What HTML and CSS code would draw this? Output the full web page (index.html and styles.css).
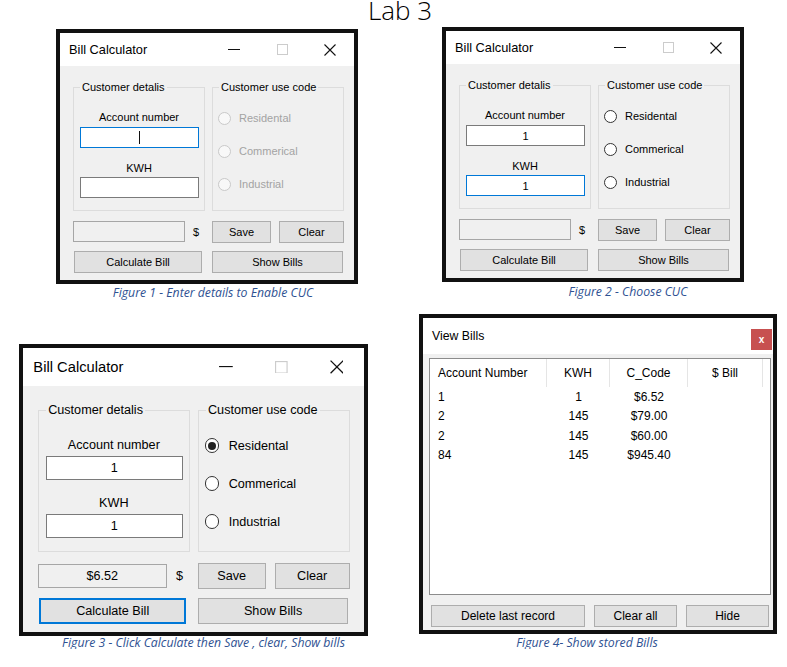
FILE: index.html
```html
<!DOCTYPE html>
<html lang="en">
<head>
<meta charset="utf-8">
<title>Lab 3</title>
<link rel="stylesheet" href="styles.css">
</head>
<body>
<h1 class="doc-title">Lab 3</h1>

<div class="row row-top">
  <figure class="fig fig-1">
    <div class="win calc">
      <div class="titlebar">
        <span class="title">Bill Calculator</span>
        <div class="controls">
          <span class="ctl"><svg width="12" height="1" viewBox="0 0 12 1"><rect width="12" height="1" fill="#111"/></svg></span>
          <span class="ctl"><svg width="11" height="11" viewBox="0 0 11 11"><rect x="0.5" y="0.5" width="10" height="10" fill="none" stroke="#cccccc"/></svg></span>
          <span class="ctl"><svg width="12" height="12" viewBox="0 0 12 12"><path d="M0.5 0.5L11.5 11.5M11.5 0.5L0.5 11.5" stroke="#111" stroke-width="1.1" fill="none"/></svg></span>
        </div>
      </div>
      <div class="calc-body">
        <fieldset class="group group-details">
          <legend>Customer detalis</legend>
          <div class="field-label lbl-account">Account number</div>
          <div class="textbox is-focused"><span class="caret"></span></div>
          <div class="field-label lbl-kwh">KWH</div>
          <div class="textbox textbox-kwh"></div>
        </fieldset>
        <fieldset class="group group-cuc is-disabled">
          <legend>Customer use code</legend>
          <div class="radio radio-first"><span class="radio-mark"></span>Residental</div>
          <div class="radio"><span class="radio-mark"></span>Commerical</div>
          <div class="radio"><span class="radio-mark"></span>Industrial</div>
        </fieldset>
        <div class="result-row"><div class="output"></div><span class="currency">$</span></div>
        <div class="actions"><span class="btn btn-save">Save</span><span class="btn btn-clear">Clear</span></div>
        <span class="btn btn-calc">Calculate Bill</span>
        <span class="btn btn-show">Show Bills</span>
      </div>
    </div>
    <figcaption class="caption">Figure 1 - Enter details to Enable CUC</figcaption>
  </figure>

  <figure class="fig fig-2">
    <div class="win calc">
      <div class="titlebar">
        <span class="title">Bill Calculator</span>
        <div class="controls">
          <span class="ctl"><svg width="12" height="1" viewBox="0 0 12 1"><rect width="12" height="1" fill="#111"/></svg></span>
          <span class="ctl"><svg width="11" height="11" viewBox="0 0 11 11"><rect x="0.5" y="0.5" width="10" height="10" fill="none" stroke="#cccccc"/></svg></span>
          <span class="ctl"><svg width="12" height="12" viewBox="0 0 12 12"><path d="M0.5 0.5L11.5 11.5M11.5 0.5L0.5 11.5" stroke="#111" stroke-width="1.1" fill="none"/></svg></span>
        </div>
      </div>
      <div class="calc-body">
        <fieldset class="group group-details">
          <legend>Customer detalis</legend>
          <div class="field-label lbl-account">Account number</div>
          <div class="textbox">1</div>
          <div class="field-label lbl-kwh">KWH</div>
          <div class="textbox textbox-kwh is-focused">1</div>
        </fieldset>
        <fieldset class="group group-cuc">
          <legend>Customer use code</legend>
          <div class="radio radio-first"><span class="radio-mark"></span>Residental</div>
          <div class="radio"><span class="radio-mark"></span>Commerical</div>
          <div class="radio"><span class="radio-mark"></span>Industrial</div>
        </fieldset>
        <div class="result-row"><div class="output"></div><span class="currency">$</span></div>
        <div class="actions"><span class="btn btn-save">Save</span><span class="btn btn-clear">Clear</span></div>
        <span class="btn btn-calc">Calculate Bill</span>
        <span class="btn btn-show">Show Bills</span>
      </div>
    </div>
    <figcaption class="caption">Figure 2 - Choose CUC</figcaption>
  </figure>
</div>

<div class="row row-bottom">
  <figure class="fig fig-3">
    <div class="win calc calc-lg">
      <div class="titlebar">
        <span class="title">Bill Calculator</span>
        <div class="controls">
          <span class="ctl"><svg width="12" height="1" viewBox="0 0 12 1"><rect width="12" height="1" fill="#111"/></svg></span>
          <span class="ctl"><svg width="11" height="11" viewBox="0 0 11 11"><rect x="0.5" y="0.5" width="10" height="10" fill="none" stroke="#cccccc"/></svg></span>
          <span class="ctl"><svg width="12" height="12" viewBox="0 0 12 12"><path d="M0.5 0.5L11.5 11.5M11.5 0.5L0.5 11.5" stroke="#111" stroke-width="1.1" fill="none"/></svg></span>
        </div>
      </div>
      <div class="calc-body">
        <fieldset class="group group-details">
          <legend>Customer detalis</legend>
          <div class="field-label lbl-account">Account number</div>
          <div class="textbox">1</div>
          <div class="field-label lbl-kwh">KWH</div>
          <div class="textbox textbox-kwh">1</div>
        </fieldset>
        <fieldset class="group group-cuc">
          <legend>Customer use code</legend>
          <div class="radio radio-first is-checked"><span class="radio-mark"></span>Residental</div>
          <div class="radio"><span class="radio-mark"></span>Commerical</div>
          <div class="radio"><span class="radio-mark"></span>Industrial</div>
        </fieldset>
        <div class="result-row"><div class="output">$6.52</div><span class="currency">$</span></div>
        <div class="actions"><span class="btn btn-save">Save</span><span class="btn btn-clear">Clear</span></div>
        <span class="btn btn-calc is-default">Calculate Bill</span>
        <span class="btn btn-show">Show Bills</span>
      </div>
    </div>
    <figcaption class="caption">Figure 3 - Click Calculate then Save , clear, Show bills</figcaption>
  </figure>

  <figure class="fig fig-4">
    <div class="win viewer">
      <div class="titlebar viewer-titlebar">
        <span class="title">View Bills</span>
        <span class="viewer-close">x</span>
      </div>
      <div class="viewer-body">
        <div class="listview">
          <div class="lv-row lv-head">
            <span class="lv-cell lv-left">Account Number</span>
            <span class="lv-cell">KWH</span>
            <span class="lv-cell">C_Code</span>
            <span class="lv-cell">$ Bill</span>
          </div>
          <div class="lv-row"><span class="lv-cell lv-left">1</span><span class="lv-cell">1</span><span class="lv-cell">$6.52</span><span class="lv-cell"></span></div>
          <div class="lv-row"><span class="lv-cell lv-left">2</span><span class="lv-cell">145</span><span class="lv-cell">$79.00</span><span class="lv-cell"></span></div>
          <div class="lv-row"><span class="lv-cell lv-left">2</span><span class="lv-cell">145</span><span class="lv-cell">$60.00</span><span class="lv-cell"></span></div>
          <div class="lv-row"><span class="lv-cell lv-left">84</span><span class="lv-cell">145</span><span class="lv-cell">$945.40</span><span class="lv-cell"></span></div>
        </div>
        <div class="viewer-actions">
          <span class="btn btn-delete">Delete last record</span>
          <span class="btn btn-wide">Clear all</span>
          <span class="btn btn-wide">Hide</span>
        </div>
      </div>
    </div>
    <figcaption class="caption">Figure 4- Show stored Bills</figcaption>
  </figure>
</div>
</body>
</html>
```

FILE: styles.css
```css
* { box-sizing: border-box; }

body {
  margin: 0;
  width: 787px;
  background: #fff;
  color: #000;
  font-family: "Liberation Sans", Arial, sans-serif;
}

.doc-title {
  margin: 0;
  height: 20px;
  line-height: 20px;
  padding-left: 13px;
  text-align: center;
  font-family: "Open Sans", "Liberation Sans", sans-serif;
  font-weight: 300;
  font-size: 26px;
}

.row { display: flex; align-items: flex-start; }
.row-top { padding-left: 56px; }
.row-bottom { padding-left: 19px; }

.fig { margin: 0; display: flex; flex-direction: column; }
.fig-1 { margin-top: 9px; }
.fig-2 { margin-top: 7px; margin-left: 84px; }
.fig-3 { margin-top: 45px; }
.fig-4 { margin-top: 15px; margin-left: 51px; }

.caption {
  margin-top: 2px;
  line-height: 13px;
  font-family: "Open Sans", "Liberation Sans", sans-serif;
  font-style: italic;
  font-size: 12.25px;
  color: #2e5192;
  text-align: center;
  white-space: nowrap;
}
.fig-1 .caption { padding-left: 12px; }
.fig-2 .caption { padding-left: 70px; margin-top: 3px; }
.fig-3 .caption { padding-left: 20px; margin-top: 0; }
.fig-4 .caption { padding-right: 22px; }

/* window frame */
.win {
  border: 4px solid #111;
  background: #f0f0f0;
  display: flex;
  flex-direction: column;
}
.titlebar {
  height: 33px;
  flex: none;
  background: #fff;
  display: flex;
  align-items: center;
  padding-left: 9px;
}
.title { flex: 1; font-size: 12.8px; }
.controls { display: flex; align-self: stretch; }
.ctl { width: 48px; display: flex; align-items: center; justify-content: center; }

/* bill calculator */
.calc { width: 302px; height: 255px; }
.calc-lg { zoom: 1.15; width: 303.5px; height: 254px; }

.calc-body {
  flex: 1;
  display: grid;
  grid-template-columns: 132px 132px;
  column-gap: 7px;
  align-content: start;
  padding: 14px 10px 7px 13px;
  font-size: 11px;
}

.group {
  margin: 0;
  padding: 0;
  min-width: 0;
  border: 1px solid #dcdcdc;
}
.group legend {
  margin-left: 6px;
  padding: 0 2px;
  line-height: 14px;
  font-size: 11px;
}
.group-details { padding-bottom: 12px; }
.group-cuc { padding-bottom: 19px; }

.field-label { text-align: center; line-height: 14px; }
.lbl-account { margin-top: 16px; }
.lbl-kwh { margin-top: 13px; }

.textbox {
  margin: 3px 0 0 6px;
  width: 119px;
  height: 21px;
  background: #fff;
  border: 1px solid #7a7a7a;
  display: flex;
  align-items: center;
  justify-content: center;
  font-size: 11px;
}
.textbox-kwh { margin-top: 2px; }
.textbox.is-focused { border-color: #0078d7; }
.caret { width: 1px; height: 13px; background: #111; }

.radio {
  display: flex;
  align-items: center;
  height: 14px;
  margin: 19px 0 0 5px;
}
.radio-first { margin-top: 17px; }
.radio-mark {
  width: 13px;
  height: 13px;
  margin-right: 8px;
  border: 1px solid #333;
  border-radius: 50%;
  background: #fff;
  display: flex;
  align-items: center;
  justify-content: center;
}
.radio.is-checked .radio-mark::after {
  content: "";
  width: 7px;
  height: 7px;
  border-radius: 50%;
  background: #222;
}
.is-disabled .radio { color: #a3a3a3; }
.is-disabled .radio-mark { border-color: #c9c9c9; background: #f8f8f8; }

.result-row {
  margin-top: 9px;
  height: 23px;
  display: flex;
  align-items: center;
}
.output {
  width: 112px;
  height: 21px;
  border: 1px solid #a6a6a6;
  background: #f0f0f0;
  display: flex;
  align-items: center;
  justify-content: center;
}
.currency { margin-left: 8px; }

.actions {
  margin-top: 9px;
  height: 23px;
  display: flex;
  align-items: center;
  gap: 8px;
}

.btn {
  height: 22px;
  border: 1px solid #adadad;
  background: #e1e1e1;
  display: flex;
  align-items: center;
  justify-content: center;
  white-space: nowrap;
}
.btn-save { width: 59px; }
.btn-clear { flex: 1; }
.btn-calc { margin: 8px 0 0 1px; width: 128px; }
.btn-show { margin-top: 8px; width: 131px; }
.btn.is-default { border: 2px solid #0078d7; }

/* view bills */
.viewer { width: 358px; height: 320px; }
.viewer-titlebar { height: 36px; }
.viewer-titlebar .title { font-size: 12.3px; }
.viewer-close {
  align-self: flex-start;
  margin: 11px 1px 0 0;
  width: 21px;
  height: 21px;
  background: #c75050;
  color: #fff;
  font-weight: bold;
  font-size: 10px;
  display: flex;
  align-items: center;
  justify-content: center;
}
.viewer-body {
  flex: 1;
  display: flex;
  flex-direction: column;
  padding: 4px 2px 3px 6px;
  font-size: 12px;
}
.listview {
  width: 342px;
  height: 237px;
  flex: none;
  background: #fff;
  border: 1px solid #8c8c8c;
}
.lv-row {
  display: grid;
  grid-template-columns: 117px 63px 78px 75px;
  height: 19.5px;
  align-items: center;
}
.lv-head { height: 28px; align-items: stretch; }
.lv-cell { text-align: center; white-space: nowrap; }
.lv-left { text-align: left; padding-left: 8px; }
.lv-head .lv-cell {
  display: flex;
  align-items: center;
  justify-content: center;
  border-right: 1px solid #e5e5e5;
}
.lv-head .lv-left { justify-content: flex-start; }

.viewer-actions {
  margin: 10px 0 0 2px;
  display: flex;
  gap: 9px;
}
.btn-delete { width: 154px; }
.btn-wide { width: 83px; }
```
